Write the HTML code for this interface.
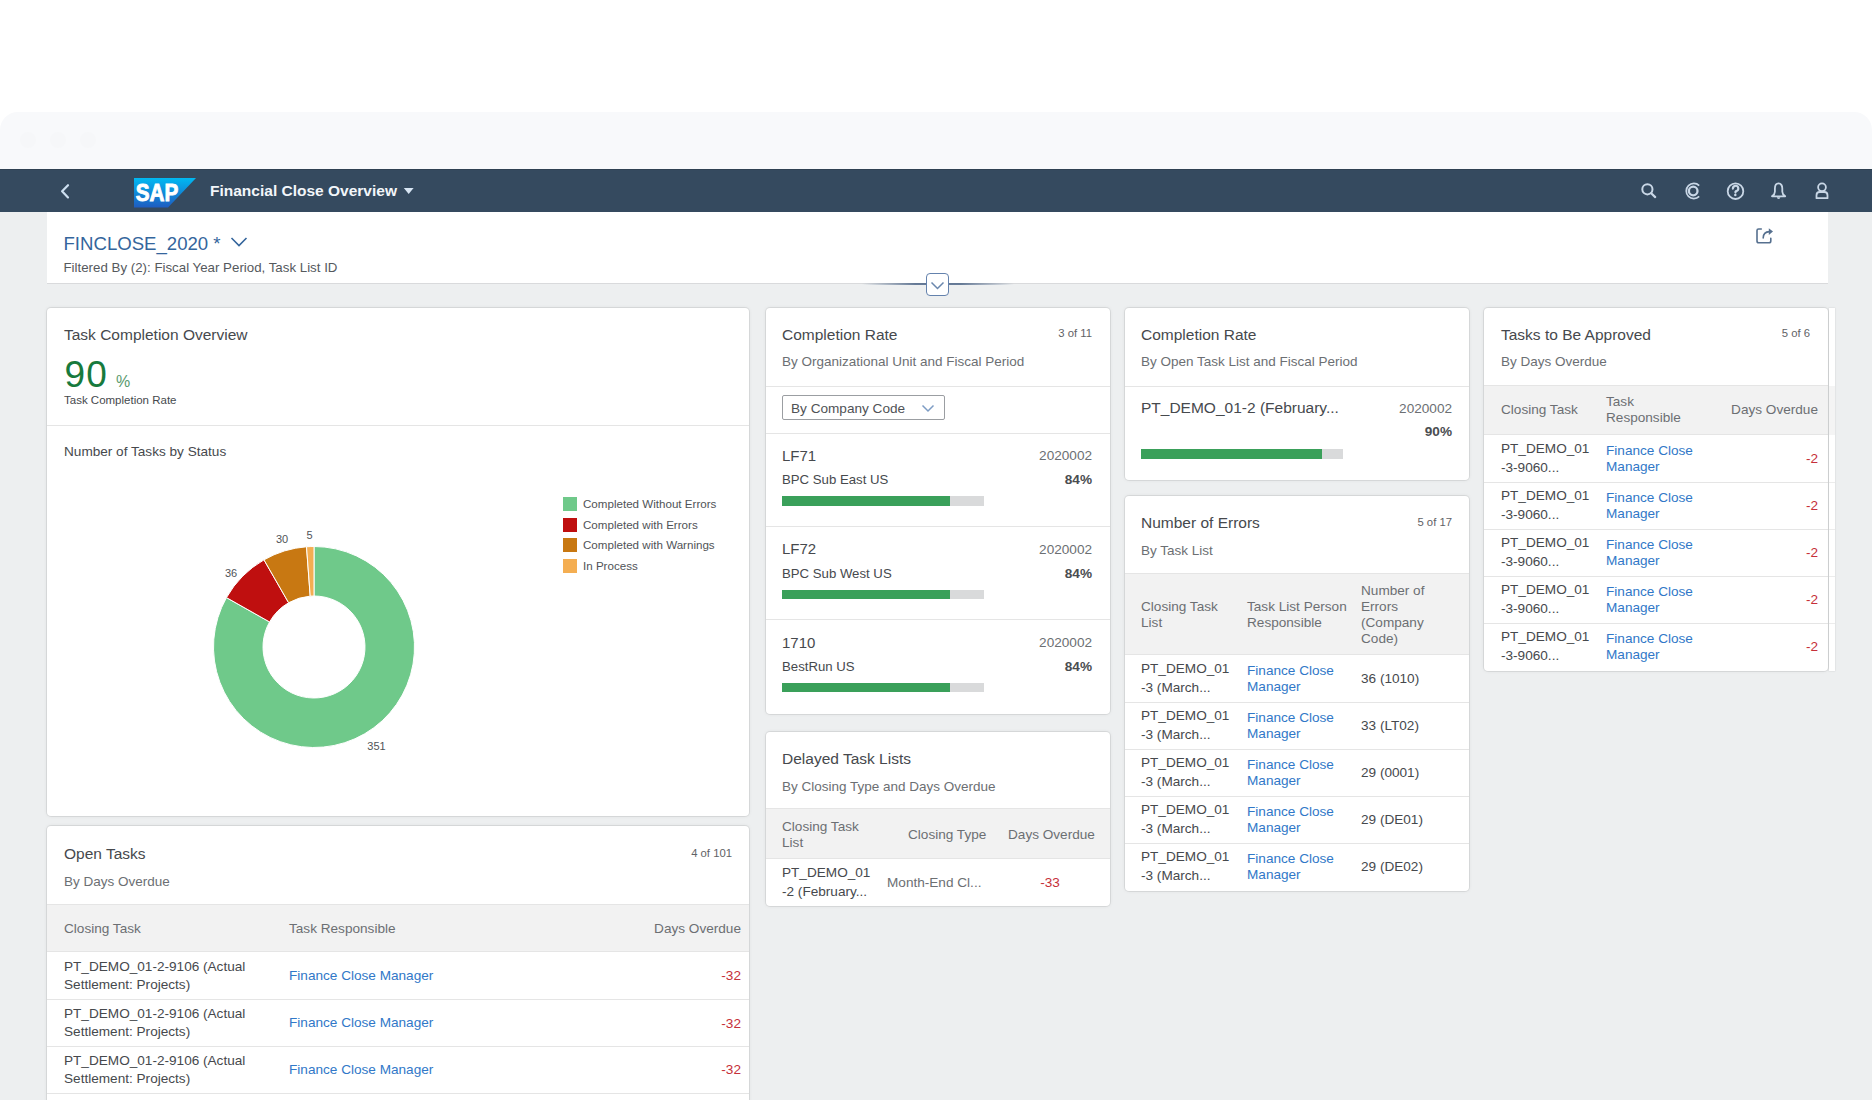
<!DOCTYPE html><html><head><meta charset="utf-8"><style>
html,body{margin:0;padding:0;width:1872px;height:1100px;overflow:hidden;background:#ffffff;font-family:"Liberation Sans",sans-serif;}
.t{position:absolute;white-space:nowrap;}
.r{position:absolute;}
.card{position:absolute;background:#fff;border-radius:4px;box-shadow:0 0 0 1px rgba(0,0,0,0.07),0 0 4px rgba(0,0,0,0.07);overflow:hidden;}
svg{position:absolute;overflow:visible;}
</style></head><body>

<div class="r" style="left:0px;top:112px;width:1872px;height:988px;background:#f8f9fb;border-radius:18px 18px 0 0;"></div>
<div class="r" style="left:20px;top:132px;width:16px;height:16px;border-radius:8px;background:#f6f7f9;"></div>
<div class="r" style="left:50px;top:132px;width:16px;height:16px;border-radius:8px;background:#f6f7f9;"></div>
<div class="r" style="left:80px;top:132px;width:16px;height:16px;border-radius:8px;background:#f6f7f9;"></div>
<div class="r" style="left:0px;top:169px;width:1872px;height:43px;background:#354a5f;border-top:1px solid #2f4152;box-sizing:border-box;"></div>
<div class="r" style="left:0px;top:212px;width:1872px;height:888px;background:#edeff0;"></div>
<svg style="left:58px;top:183px" width="14" height="16" viewBox="0 0 14 16"><path d="M10 2.2 L4.1 8.2 L10 14.4" stroke="#cddff0" stroke-width="2.2" fill="none" stroke-linecap="round" stroke-linejoin="round"/></svg>
<svg style="left:134px;top:178px" width="62" height="30" viewBox="0 0 62 30">
<defs><linearGradient id="sg" x1="0" y1="0" x2="0" y2="1"><stop offset="0" stop-color="#00b9f2"/><stop offset="1" stop-color="#1f5cc0"/></linearGradient></defs>
<polygon points="0,0 62,0 34,29.5 0,29.5" fill="url(#sg)"/>
<text x="1.8" y="23.4" font-family="Liberation Sans" font-weight="700" font-size="23.5" fill="#fff" stroke="#fff" stroke-width="0.9" textLength="42.5" lengthAdjust="spacingAndGlyphs">SAP</text>
</svg>
<div class="t" style="top:183px;font-size:15.5px;line-height:15.5px;color:#f2f6fa;font-weight:700;left:210.00px;">Financial Close Overview</div>
<svg style="left:403px;top:187px" width="11" height="8" viewBox="0 0 11 8"><polygon points="0.8,1 10.6,1 5.7,7" fill="#d8e6f4"/></svg>
<svg style="left:1636px;top:178px" width="26" height="26" viewBox="0 0 26 26" fill="none" stroke="#c9d7e6" stroke-width="2" stroke-linecap="round">
<circle cx="11.4" cy="11.3" r="5.1"/><line x1="15.2" y1="15.2" x2="19.2" y2="19.1" stroke-width="2.2"/></svg>
<svg style="left:1680px;top:178px" width="26" height="26" viewBox="0 0 26 26" fill="none" stroke="#c9d7e6" stroke-width="1.7">
<path d="M19.2 7.6 A7.6 7.6 0 1 0 19.2 18.4"/><circle cx="13.2" cy="13" r="4.3" stroke-width="2.3"/></svg>
<svg style="left:1722px;top:178px" width="26" height="26" viewBox="0 0 26 26" fill="none" stroke="#c9d7e6" stroke-width="1.8">
<circle cx="13.5" cy="13.2" r="7.8"/><path d="M10.9 10.6 A2.7 2.7 0 1 1 14.2 13.1 L13.5 13.8 L13.5 14.6" stroke-width="2.2" stroke-linecap="round"/><circle cx="13.3" cy="16.9" r="1.25" fill="#c9d7e6" stroke="none"/></svg>
<svg style="left:1765px;top:178px" width="26" height="26" viewBox="0 0 26 26" fill="none" stroke="#c9d7e6" stroke-width="1.8" stroke-linejoin="round">
<path d="M13.6 5.4 C11.2 5.4 9.9 7.6 9.9 10.6 L9.9 13.8 C9.9 15.8 8.6 17.2 7 18.3 L20.2 18.3 C18.6 17.2 17.3 15.8 17.3 13.8 L17.3 10.6 C17.3 7.6 16 5.4 13.6 5.4 Z"/><path d="M11.9 19.2 A1.7 1.7 0 0 0 15.3 19.2 Z" fill="#c9d7e6" stroke="none"/></svg>
<svg style="left:1809px;top:178px" width="26" height="26" viewBox="0 0 26 26" fill="none" stroke="#c9d7e6" stroke-width="1.8" stroke-linejoin="round">
<circle cx="13" cy="9.3" r="3.9"/><path d="M7.5 20.2 L7.5 17.3 C7.5 15.1 8.9 14 10.8 14 L15.2 14 C17.1 14 18.5 15.1 18.5 17.3 L18.5 20.2 Z"/></svg>
<div class="r" style="left:47px;top:212px;width:1781px;height:71px;background:#ffffff;box-shadow:0 1px 0 #d9dadc;"></div>
<div class="t" style="top:235px;font-size:18.6px;line-height:18.6px;color:#34659c;left:63.50px;">FINCLOSE_2020 *</div>
<svg style="left:230px;top:236px" width="18" height="12" viewBox="0 0 18 12"><path d="M1.5 2 L9 9.5 L16.5 2" stroke="#34659c" stroke-width="1.6" fill="none"/></svg>
<div class="t" style="top:261px;font-size:13.3px;line-height:13.3px;color:#55595d;left:63.50px;">Filtered By (2): Fiscal Year Period, Task List ID</div>
<svg style="left:0;top:0" width="1872" height="300"><g fill="none" stroke="#56708f" stroke-width="1.6" stroke-linecap="round" stroke-linejoin="round"><path d="M1761.3,229 L1758.6,229 Q1757,229 1757,230.6 L1757,241 Q1757,242.8 1758.8,242.8 L1769,242.8 Q1770.8,242.8 1770.8,241 L1770.8,238.2"/><path d="M1763.2,238 C1763.2,234 1765.5,231.8 1769.5,231.6"/></g><polygon points="1768.8,228.2 1773,231.6 1768.8,235" fill="#56708f"/></svg>
<div class="r" style="left:862px;top:283px;width:152px;height:1.5px;background:linear-gradient(90deg,rgba(70,95,130,0),rgba(70,95,130,0.8) 35%,rgba(70,95,130,0.8) 65%,rgba(70,95,130,0));"></div>
<div class="r" style="left:926px;top:272.5px;width:23px;height:23px;border:1.8px solid #6482ad;border-radius:4px;background:#fff;box-sizing:border-box;"></div>
<svg style="left:926px;top:272.5px" width="23" height="23" viewBox="0 0 23 23"><path d="M5.5 9.5 L11.5 15.5 L17.5 9.5" stroke="#6a87ad" stroke-width="1.5" fill="none"/></svg>
<div class="card" style="left:47px;top:308px;width:702px;height:508px;"></div>
<div class="t" style="top:327px;font-size:15.5px;line-height:15.5px;color:#46494d;left:64.00px;">Task Completion Overview</div>
<div class="t" style="top:356px;font-size:37px;line-height:37px;color:#177a3d;letter-spacing:1.2px;left:64.50px;">90</div>
<div class="t" style="top:374px;font-size:16px;line-height:16px;color:#5a9a6e;left:116.00px;">%</div>
<div class="t" style="top:395px;font-size:11.5px;line-height:11.5px;color:#46494d;left:64.00px;">Task Completion Rate</div>
<div class="r" style="left:47px;top:425px;width:702px;height:1px;background:#e5e5e5;"></div>
<div class="t" style="top:445px;font-size:13.6px;line-height:13.6px;color:#46494d;left:64.00px;">Number of Tasks by Status</div>
<svg style="left:0;top:0" width="1872" height="1100"><path d="M314.00,546.50 A100.5,100.5 0 1 1 226.47,597.62 L269.58,621.94 A51,51 0 1 0 314.00,596.00 Z" fill="#6fc98a" stroke="#fff" stroke-width="1"/><path d="M226.47,597.62 A100.5,100.5 0 0 1 263.97,559.84 L288.61,602.77 A51,51 0 0 0 269.58,621.94 Z" fill="#bf0f0f" stroke="#fff" stroke-width="1"/><path d="M263.97,559.84 A100.5,100.5 0 0 1 306.53,546.78 L310.21,596.14 A51,51 0 0 0 288.61,602.77 Z" fill="#c87812" stroke="#fff" stroke-width="1"/><path d="M306.53,546.78 A100.5,100.5 0 0 1 314.00,546.50 L314.00,596.00 A51,51 0 0 0 310.21,596.14 Z" fill="#f4ae52" stroke="#fff" stroke-width="1"/></svg>
<div class="t" style="top:568px;font-size:11px;line-height:11px;color:#505357;left:31.00px;width:400px;text-align:center;">36</div>
<div class="t" style="top:534px;font-size:11px;line-height:11px;color:#505357;left:82.00px;width:400px;text-align:center;">30</div>
<div class="t" style="top:530px;font-size:11px;line-height:11px;color:#505357;left:109.50px;width:400px;text-align:center;">5</div>
<div class="t" style="top:741px;font-size:11px;line-height:11px;color:#505357;left:176.50px;width:400px;text-align:center;">351</div>
<div class="r" style="left:563px;top:497px;width:14px;height:14px;background:#6fc98a;"></div>
<div class="t" style="top:498px;font-size:11.6px;line-height:11.6px;color:#505357;left:583.00px;">Completed Without Errors</div>
<div class="r" style="left:563px;top:518px;width:14px;height:14px;background:#bf0f0f;"></div>
<div class="t" style="top:519px;font-size:11.6px;line-height:11.6px;color:#505357;left:583.00px;">Completed with Errors</div>
<div class="r" style="left:563px;top:538px;width:14px;height:14px;background:#c87812;"></div>
<div class="t" style="top:539px;font-size:11.6px;line-height:11.6px;color:#505357;left:583.00px;">Completed with Warnings</div>
<div class="r" style="left:563px;top:559px;width:14px;height:14px;background:#f4ae52;"></div>
<div class="t" style="top:560px;font-size:11.6px;line-height:11.6px;color:#505357;left:583.00px;">In Process</div>
<div class="card" style="left:47px;top:826px;width:702px;height:284px;"></div>
<div class="t" style="top:846px;font-size:15.5px;line-height:15.5px;color:#46494d;left:64.00px;">Open Tasks</div>
<div class="t" style="top:848px;font-size:11.3px;line-height:11.3px;color:#5f6266;right:1140.00px;text-align:right;">4 of 101</div>
<div class="t" style="top:875px;font-size:13.5px;line-height:13.5px;color:#6c6f73;left:64.00px;">By Days Overdue</div>
<div class="r" style="left:47px;top:904px;width:702px;height:48px;background:#f2f2f2;border-top:1px solid #e5e5e5;box-sizing:border-box;"></div>
<div class="r" style="left:47px;top:951px;width:702px;height:1px;background:#e5e5e5;"></div>
<div class="t" style="top:922px;font-size:13.6px;line-height:13.6px;color:#6c6f73;left:64.00px;">Closing Task</div>
<div class="t" style="top:922px;font-size:13.6px;line-height:13.6px;color:#6c6f73;left:289.00px;">Task Responsible</div>
<div class="t" style="top:922px;font-size:13.6px;line-height:13.6px;color:#6c6f73;right:1131.00px;text-align:right;">Days Overdue</div>
<div class="t" style="top:960px;font-size:13.6px;line-height:13.6px;color:#46494d;left:64.00px;">PT_DEMO_01-2-9106 (Actual</div>
<div class="t" style="top:978px;font-size:13.6px;line-height:13.6px;color:#46494d;left:64.00px;">Settlement: Projects)</div>
<div class="t" style="top:969px;font-size:13.6px;line-height:13.6px;color:#3178c8;left:289.00px;">Finance Close Manager</div>
<div class="t" style="top:969px;font-size:13.6px;line-height:13.6px;color:#c6303a;right:1131.00px;text-align:right;">-32</div>
<div class="r" style="left:47px;top:999px;width:702px;height:1px;background:#e5e5e5;"></div>
<div class="t" style="top:1007px;font-size:13.6px;line-height:13.6px;color:#46494d;left:64.00px;">PT_DEMO_01-2-9106 (Actual</div>
<div class="t" style="top:1025px;font-size:13.6px;line-height:13.6px;color:#46494d;left:64.00px;">Settlement: Projects)</div>
<div class="t" style="top:1016px;font-size:13.6px;line-height:13.6px;color:#3178c8;left:289.00px;">Finance Close Manager</div>
<div class="t" style="top:1017px;font-size:13.6px;line-height:13.6px;color:#c6303a;right:1131.00px;text-align:right;">-32</div>
<div class="r" style="left:47px;top:1046px;width:702px;height:1px;background:#e5e5e5;"></div>
<div class="t" style="top:1054px;font-size:13.6px;line-height:13.6px;color:#46494d;left:64.00px;">PT_DEMO_01-2-9106 (Actual</div>
<div class="t" style="top:1072px;font-size:13.6px;line-height:13.6px;color:#46494d;left:64.00px;">Settlement: Projects)</div>
<div class="t" style="top:1063px;font-size:13.6px;line-height:13.6px;color:#3178c8;left:289.00px;">Finance Close Manager</div>
<div class="t" style="top:1063px;font-size:13.6px;line-height:13.6px;color:#c6303a;right:1131.00px;text-align:right;">-32</div>
<div class="r" style="left:47px;top:1093px;width:702px;height:1px;background:#e5e5e5;"></div>
<div class="t" style="top:1101px;font-size:13.6px;line-height:13.6px;color:#46494d;left:64.00px;">PT_DEMO_01-2-9106 (Actual</div>
<div class="t" style="top:1119px;font-size:13.6px;line-height:13.6px;color:#46494d;left:64.00px;">Settlement: Projects)</div>
<div class="t" style="top:1110px;font-size:13.6px;line-height:13.6px;color:#3178c8;left:289.00px;">Finance Close Manager</div>
<div class="t" style="top:1111px;font-size:13.6px;line-height:13.6px;color:#c6303a;right:1131.00px;text-align:right;">-32</div>
<div class="r" style="left:47px;top:1140px;width:702px;height:1px;background:#e5e5e5;"></div>
<div class="card" style="left:766px;top:308px;width:344px;height:406px;"></div>
<div class="t" style="top:327px;font-size:15.5px;line-height:15.5px;color:#46494d;left:782.00px;">Completion Rate</div>
<div class="t" style="top:328px;font-size:11.3px;line-height:11.3px;color:#5f6266;right:780.00px;text-align:right;">3 of 11</div>
<div class="t" style="top:355px;font-size:13.5px;line-height:13.5px;color:#6c6f73;left:782.00px;">By Organizational Unit and Fiscal Period</div>
<div class="r" style="left:766px;top:386px;width:344px;height:1px;background:#e5e5e5;"></div>
<div class="r" style="left:782px;top:395px;width:163px;height:25px;border:1px solid #9b9ea2;border-radius:2px;box-sizing:border-box;background:#fff;"></div>
<div class="t" style="top:402px;font-size:13.6px;line-height:13.6px;color:#4f5256;left:791.00px;">By Company Code</div>
<svg style="left:921px;top:403px" width="14" height="10" viewBox="0 0 14 10"><path d="M1.5 2.5 L7 8 L12.5 2.5" stroke="#7d9cc4" stroke-width="1.5" fill="none"/></svg>
<div class="r" style="left:766px;top:433px;width:344px;height:1px;background:#e5e5e5;"></div>
<div class="t" style="top:448px;font-size:15px;line-height:15px;color:#46494d;left:782.00px;">LF71</div>
<div class="t" style="top:449px;font-size:13.6px;line-height:13.6px;color:#6c6f73;right:780.00px;text-align:right;">2020002</div>
<div class="t" style="top:473px;font-size:13.2px;line-height:13.2px;color:#46494d;left:782.00px;">BPC Sub East US</div>
<div class="t" style="top:473px;font-size:13.6px;line-height:13.6px;color:#4a4d51;font-weight:700;right:780.00px;text-align:right;">84%</div>
<div class="r" style="left:782px;top:496px;width:202px;height:10px;background:#d9dadb;"></div>
<div class="r" style="left:782px;top:496px;width:168px;height:10px;background:#3aa05a;"></div>
<div class="r" style="left:766px;top:526px;width:344px;height:1px;background:#e5e5e5;"></div>
<div class="t" style="top:541px;font-size:15px;line-height:15px;color:#46494d;left:782.00px;">LF72</div>
<div class="t" style="top:543px;font-size:13.6px;line-height:13.6px;color:#6c6f73;right:780.00px;text-align:right;">2020002</div>
<div class="t" style="top:567px;font-size:13.2px;line-height:13.2px;color:#46494d;left:782.00px;">BPC Sub West US</div>
<div class="t" style="top:567px;font-size:13.6px;line-height:13.6px;color:#4a4d51;font-weight:700;right:780.00px;text-align:right;">84%</div>
<div class="r" style="left:782px;top:590px;width:202px;height:9px;background:#d9dadb;"></div>
<div class="r" style="left:782px;top:590px;width:168px;height:9px;background:#3aa05a;"></div>
<div class="r" style="left:766px;top:619px;width:344px;height:1px;background:#e5e5e5;"></div>
<div class="t" style="top:635px;font-size:15px;line-height:15px;color:#46494d;left:782.00px;">1710</div>
<div class="t" style="top:636px;font-size:13.6px;line-height:13.6px;color:#6c6f73;right:780.00px;text-align:right;">2020002</div>
<div class="t" style="top:660px;font-size:13.2px;line-height:13.2px;color:#46494d;left:782.00px;">BestRun US</div>
<div class="t" style="top:660px;font-size:13.6px;line-height:13.6px;color:#4a4d51;font-weight:700;right:780.00px;text-align:right;">84%</div>
<div class="r" style="left:782px;top:683px;width:202px;height:9px;background:#d9dadb;"></div>
<div class="r" style="left:782px;top:683px;width:168px;height:9px;background:#3aa05a;"></div>
<div class="card" style="left:766px;top:732px;width:344px;height:174px;"></div>
<div class="t" style="top:751px;font-size:15.5px;line-height:15.5px;color:#46494d;left:782.00px;">Delayed Task Lists</div>
<div class="t" style="top:780px;font-size:13.5px;line-height:13.5px;color:#6c6f73;left:782.00px;">By Closing Type and Days Overdue</div>
<div class="r" style="left:766px;top:809px;width:344px;height:50px;background:#f2f2f2;"></div>
<div class="r" style="left:766px;top:808px;width:344px;height:1px;background:#e5e5e5;"></div>
<div class="r" style="left:766px;top:858px;width:344px;height:1px;background:#e5e5e5;"></div>
<div class="t" style="top:820px;font-size:13.6px;line-height:13.6px;color:#6c6f73;left:782.00px;">Closing Task</div>
<div class="t" style="top:836px;font-size:13.6px;line-height:13.6px;color:#6c6f73;left:782.00px;">List</div>
<div class="t" style="top:828px;font-size:13.6px;line-height:13.6px;color:#6c6f73;left:908.00px;">Closing Type</div>
<div class="t" style="top:828px;font-size:13.6px;line-height:13.6px;color:#6c6f73;left:1008.00px;">Days Overdue</div>
<div class="t" style="top:866px;font-size:13.6px;line-height:13.6px;color:#46494d;left:782.00px;">PT_DEMO_01</div>
<div class="t" style="top:885px;font-size:13.6px;line-height:13.6px;color:#46494d;left:782.00px;">-2 (February...</div>
<div class="t" style="top:876px;font-size:13.6px;line-height:13.6px;color:#6c6f73;left:887.00px;">Month-End Cl...</div>
<div class="t" style="top:876px;font-size:13.6px;line-height:13.6px;color:#c6303a;left:850.00px;width:400px;text-align:center;">-33</div>
<div class="card" style="left:1125px;top:308px;width:344px;height:172px;"></div>
<div class="t" style="top:327px;font-size:15.5px;line-height:15.5px;color:#46494d;left:1141.00px;">Completion Rate</div>
<div class="t" style="top:355px;font-size:13.5px;line-height:13.5px;color:#6c6f73;left:1141.00px;">By Open Task List and Fiscal Period</div>
<div class="r" style="left:1125px;top:386px;width:344px;height:1px;background:#e5e5e5;"></div>
<div class="t" style="top:400px;font-size:15.5px;line-height:15.5px;color:#46494d;left:1141.00px;">PT_DEMO_01-2 (February...</div>
<div class="t" style="top:402px;font-size:13.6px;line-height:13.6px;color:#6c6f73;right:420.00px;text-align:right;">2020002</div>
<div class="t" style="top:425px;font-size:13.6px;line-height:13.6px;color:#4a4d51;font-weight:700;right:420.00px;text-align:right;">90%</div>
<div class="r" style="left:1141px;top:449px;width:202px;height:10px;background:#d9dadb;"></div>
<div class="r" style="left:1141px;top:449px;width:181px;height:10px;background:#3aa05a;"></div>
<div class="card" style="left:1125px;top:496px;width:344px;height:395px;"></div>
<div class="t" style="top:515px;font-size:15.5px;line-height:15.5px;color:#46494d;left:1141.00px;">Number of Errors</div>
<div class="t" style="top:517px;font-size:11.3px;line-height:11.3px;color:#5f6266;right:420.00px;text-align:right;">5 of 17</div>
<div class="t" style="top:544px;font-size:13.5px;line-height:13.5px;color:#6c6f73;left:1141.00px;">By Task List</div>
<div class="r" style="left:1125px;top:574px;width:344px;height:81px;background:#f2f2f2;"></div>
<div class="r" style="left:1125px;top:573px;width:344px;height:1px;background:#e5e5e5;"></div>
<div class="r" style="left:1125px;top:654px;width:344px;height:1px;background:#e5e5e5;"></div>
<div class="t" style="top:600px;font-size:13.6px;line-height:13.6px;color:#6c6f73;left:1141.00px;">Closing Task</div>
<div class="t" style="top:616px;font-size:13.6px;line-height:13.6px;color:#6c6f73;left:1141.00px;">List</div>
<div class="t" style="top:600px;font-size:13.6px;line-height:13.6px;color:#6c6f73;left:1247.00px;">Task List Person</div>
<div class="t" style="top:616px;font-size:13.6px;line-height:13.6px;color:#6c6f73;left:1247.00px;">Responsible</div>
<div class="t" style="top:584px;font-size:13.6px;line-height:13.6px;color:#6c6f73;left:1361.00px;">Number of</div>
<div class="t" style="top:600px;font-size:13.6px;line-height:13.6px;color:#6c6f73;left:1361.00px;">Errors</div>
<div class="t" style="top:616px;font-size:13.6px;line-height:13.6px;color:#6c6f73;left:1361.00px;">(Company</div>
<div class="t" style="top:632px;font-size:13.6px;line-height:13.6px;color:#6c6f73;left:1361.00px;">Code)</div>
<div class="t" style="top:662px;font-size:13.6px;line-height:13.6px;color:#46494d;left:1141.00px;">PT_DEMO_01</div>
<div class="t" style="top:681px;font-size:13.6px;line-height:13.6px;color:#46494d;left:1141.00px;">-3 (March...</div>
<div class="t" style="top:664px;font-size:13.6px;line-height:13.6px;color:#3178c8;left:1247.00px;">Finance Close</div>
<div class="t" style="top:680px;font-size:13.6px;line-height:13.6px;color:#3178c8;left:1247.00px;">Manager</div>
<div class="t" style="top:672px;font-size:13.6px;line-height:13.6px;color:#46494d;left:1361.00px;">36 (1010)</div>
<div class="r" style="left:1125px;top:702px;width:344px;height:1px;background:#e5e5e5;"></div>
<div class="t" style="top:709px;font-size:13.6px;line-height:13.6px;color:#46494d;left:1141.00px;">PT_DEMO_01</div>
<div class="t" style="top:728px;font-size:13.6px;line-height:13.6px;color:#46494d;left:1141.00px;">-3 (March...</div>
<div class="t" style="top:711px;font-size:13.6px;line-height:13.6px;color:#3178c8;left:1247.00px;">Finance Close</div>
<div class="t" style="top:727px;font-size:13.6px;line-height:13.6px;color:#3178c8;left:1247.00px;">Manager</div>
<div class="t" style="top:719px;font-size:13.6px;line-height:13.6px;color:#46494d;left:1361.00px;">33 (LT02)</div>
<div class="r" style="left:1125px;top:749px;width:344px;height:1px;background:#e5e5e5;"></div>
<div class="t" style="top:756px;font-size:13.6px;line-height:13.6px;color:#46494d;left:1141.00px;">PT_DEMO_01</div>
<div class="t" style="top:775px;font-size:13.6px;line-height:13.6px;color:#46494d;left:1141.00px;">-3 (March...</div>
<div class="t" style="top:758px;font-size:13.6px;line-height:13.6px;color:#3178c8;left:1247.00px;">Finance Close</div>
<div class="t" style="top:774px;font-size:13.6px;line-height:13.6px;color:#3178c8;left:1247.00px;">Manager</div>
<div class="t" style="top:766px;font-size:13.6px;line-height:13.6px;color:#46494d;left:1361.00px;">29 (0001)</div>
<div class="r" style="left:1125px;top:796px;width:344px;height:1px;background:#e5e5e5;"></div>
<div class="t" style="top:803px;font-size:13.6px;line-height:13.6px;color:#46494d;left:1141.00px;">PT_DEMO_01</div>
<div class="t" style="top:822px;font-size:13.6px;line-height:13.6px;color:#46494d;left:1141.00px;">-3 (March...</div>
<div class="t" style="top:805px;font-size:13.6px;line-height:13.6px;color:#3178c8;left:1247.00px;">Finance Close</div>
<div class="t" style="top:821px;font-size:13.6px;line-height:13.6px;color:#3178c8;left:1247.00px;">Manager</div>
<div class="t" style="top:813px;font-size:13.6px;line-height:13.6px;color:#46494d;left:1361.00px;">29 (DE01)</div>
<div class="r" style="left:1125px;top:843px;width:344px;height:1px;background:#e5e5e5;"></div>
<div class="t" style="top:850px;font-size:13.6px;line-height:13.6px;color:#46494d;left:1141.00px;">PT_DEMO_01</div>
<div class="t" style="top:869px;font-size:13.6px;line-height:13.6px;color:#46494d;left:1141.00px;">-3 (March...</div>
<div class="t" style="top:852px;font-size:13.6px;line-height:13.6px;color:#3178c8;left:1247.00px;">Finance Close</div>
<div class="t" style="top:868px;font-size:13.6px;line-height:13.6px;color:#3178c8;left:1247.00px;">Manager</div>
<div class="t" style="top:860px;font-size:13.6px;line-height:13.6px;color:#46494d;left:1361.00px;">29 (DE02)</div>
<div class="card" style="left:1484px;top:308px;width:344px;height:363px;"></div>
<div class="t" style="top:327px;font-size:15.5px;line-height:15.5px;color:#46494d;left:1501.00px;">Tasks to Be Approved</div>
<div class="t" style="top:328px;font-size:11.3px;line-height:11.3px;color:#5f6266;right:62.00px;text-align:right;">5 of 6</div>
<div class="t" style="top:355px;font-size:13.5px;line-height:13.5px;color:#6c6f73;left:1501.00px;">By Days Overdue</div>
<div class="r" style="left:1484px;top:386px;width:344px;height:49px;background:#f2f2f2;"></div>
<div class="r" style="left:1484px;top:385px;width:344px;height:1px;background:#e5e5e5;"></div>
<div class="r" style="left:1484px;top:434px;width:344px;height:1px;background:#e5e5e5;"></div>
<div class="t" style="top:403px;font-size:13.6px;line-height:13.6px;color:#6c6f73;left:1501.00px;">Closing Task</div>
<div class="t" style="top:395px;font-size:13.6px;line-height:13.6px;color:#6c6f73;left:1606.00px;">Task</div>
<div class="t" style="top:411px;font-size:13.6px;line-height:13.6px;color:#6c6f73;left:1606.00px;">Responsible</div>
<div class="t" style="top:403px;font-size:13.6px;line-height:13.6px;color:#6c6f73;right:54.00px;text-align:right;">Days Overdue</div>
<div class="t" style="top:442px;font-size:13.6px;line-height:13.6px;color:#46494d;left:1501.00px;">PT_DEMO_01</div>
<div class="t" style="top:461px;font-size:13.6px;line-height:13.6px;color:#46494d;left:1501.00px;">-3-9060...</div>
<div class="t" style="top:444px;font-size:13.6px;line-height:13.6px;color:#3178c8;left:1606.00px;">Finance Close</div>
<div class="t" style="top:460px;font-size:13.6px;line-height:13.6px;color:#3178c8;left:1606.00px;">Manager</div>
<div class="t" style="top:452px;font-size:13.6px;line-height:13.6px;color:#c6303a;right:54.00px;text-align:right;">-2</div>
<div class="r" style="left:1484px;top:482px;width:344px;height:1px;background:#e5e5e5;"></div>
<div class="t" style="top:489px;font-size:13.6px;line-height:13.6px;color:#46494d;left:1501.00px;">PT_DEMO_01</div>
<div class="t" style="top:508px;font-size:13.6px;line-height:13.6px;color:#46494d;left:1501.00px;">-3-9060...</div>
<div class="t" style="top:491px;font-size:13.6px;line-height:13.6px;color:#3178c8;left:1606.00px;">Finance Close</div>
<div class="t" style="top:507px;font-size:13.6px;line-height:13.6px;color:#3178c8;left:1606.00px;">Manager</div>
<div class="t" style="top:499px;font-size:13.6px;line-height:13.6px;color:#c6303a;right:54.00px;text-align:right;">-2</div>
<div class="r" style="left:1484px;top:529px;width:344px;height:1px;background:#e5e5e5;"></div>
<div class="t" style="top:536px;font-size:13.6px;line-height:13.6px;color:#46494d;left:1501.00px;">PT_DEMO_01</div>
<div class="t" style="top:555px;font-size:13.6px;line-height:13.6px;color:#46494d;left:1501.00px;">-3-9060...</div>
<div class="t" style="top:538px;font-size:13.6px;line-height:13.6px;color:#3178c8;left:1606.00px;">Finance Close</div>
<div class="t" style="top:554px;font-size:13.6px;line-height:13.6px;color:#3178c8;left:1606.00px;">Manager</div>
<div class="t" style="top:546px;font-size:13.6px;line-height:13.6px;color:#c6303a;right:54.00px;text-align:right;">-2</div>
<div class="r" style="left:1484px;top:576px;width:344px;height:1px;background:#e5e5e5;"></div>
<div class="t" style="top:583px;font-size:13.6px;line-height:13.6px;color:#46494d;left:1501.00px;">PT_DEMO_01</div>
<div class="t" style="top:602px;font-size:13.6px;line-height:13.6px;color:#46494d;left:1501.00px;">-3-9060...</div>
<div class="t" style="top:585px;font-size:13.6px;line-height:13.6px;color:#3178c8;left:1606.00px;">Finance Close</div>
<div class="t" style="top:601px;font-size:13.6px;line-height:13.6px;color:#3178c8;left:1606.00px;">Manager</div>
<div class="t" style="top:593px;font-size:13.6px;line-height:13.6px;color:#c6303a;right:54.00px;text-align:right;">-2</div>
<div class="r" style="left:1484px;top:623px;width:344px;height:1px;background:#e5e5e5;"></div>
<div class="t" style="top:630px;font-size:13.6px;line-height:13.6px;color:#46494d;left:1501.00px;">PT_DEMO_01</div>
<div class="t" style="top:649px;font-size:13.6px;line-height:13.6px;color:#46494d;left:1501.00px;">-3-9060...</div>
<div class="t" style="top:632px;font-size:13.6px;line-height:13.6px;color:#3178c8;left:1606.00px;">Finance Close</div>
<div class="t" style="top:648px;font-size:13.6px;line-height:13.6px;color:#3178c8;left:1606.00px;">Manager</div>
<div class="t" style="top:640px;font-size:13.6px;line-height:13.6px;color:#c6303a;right:54.00px;text-align:right;">-2</div>
<div class="r" style="left:1829px;top:308px;width:6px;height:363px;background:#fff;box-shadow:0 0 0 0.5px rgba(0,0,0,0.05),0 0 3px rgba(0,0,0,0.05);overflow:hidden;"></div>
<div class="r" style="left:1829px;top:386px;width:6px;height:49px;background:#f4f4f4;"></div>
<div class="r" style="left:1829px;top:482px;width:6px;height:1px;background:#ececec;"></div>
<div class="r" style="left:1829px;top:529px;width:6px;height:1px;background:#ececec;"></div>
<div class="r" style="left:1829px;top:576px;width:6px;height:1px;background:#ececec;"></div>
<div class="r" style="left:1829px;top:623px;width:6px;height:1px;background:#ececec;"></div>
</body></html>
